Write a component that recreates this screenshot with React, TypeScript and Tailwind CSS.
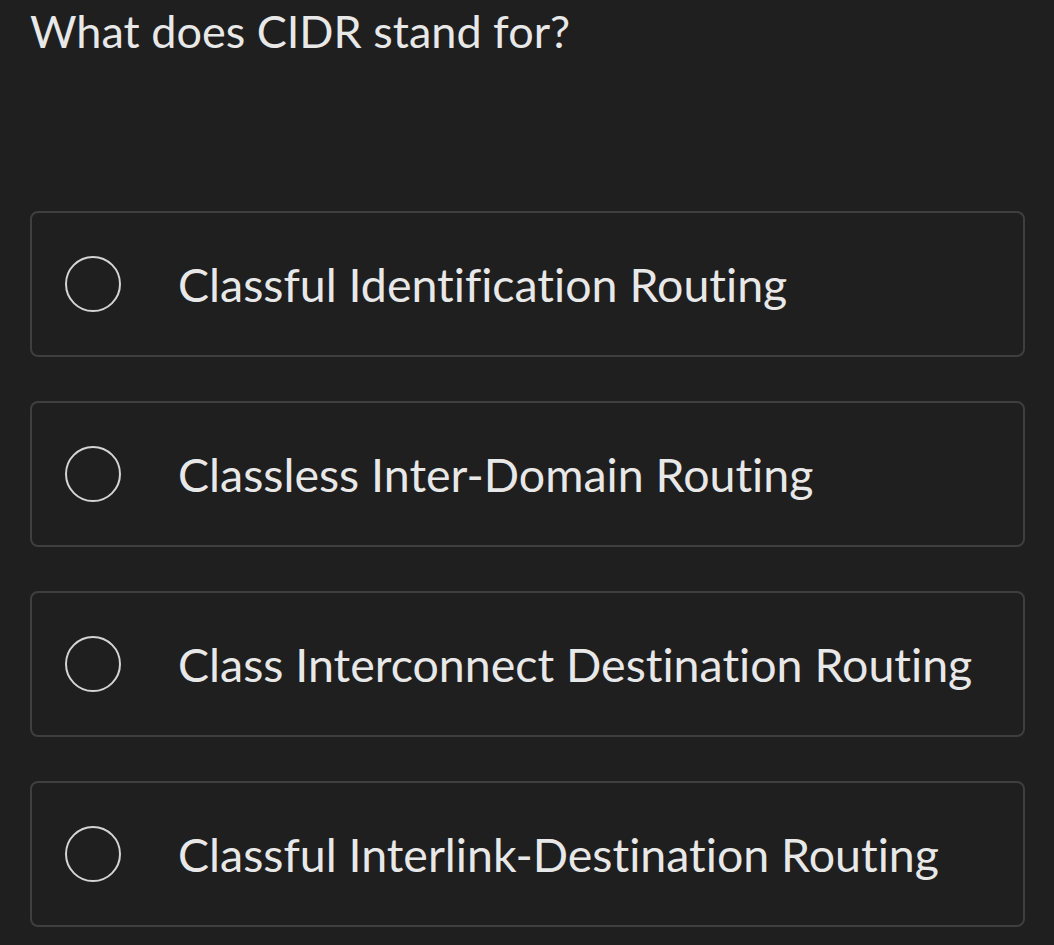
const options = [
  'Classful Identification Routing',
  'Classless Inter-Domain Routing',
  'Class Interconnect Destination Routing',
  'Classful Interlink-Destination Routing',
];

export default function App() {
  return (
    <div
      className="min-h-[945px] w-full bg-[#1f1f1f] px-[30px] pt-[3px] text-[#e8e8e8] [font-variant-ligatures:none]"
      style={{ fontFamily: 'Lato, "Noto Sans", sans-serif' }}
    >
      <h1 className="text-[45px] leading-[56px] font-normal">What does CIDR stand for?</h1>

      <div className="mt-[152px] flex flex-col gap-[44px]">
        {options.map((o) => (
          <label
            key={o}
            className="flex h-[146px] w-[995px] cursor-pointer items-center rounded-[8px] border-2 border-[#3f3f3f] pl-[33px]"
          >
            <span className="h-[56px] w-[56px] shrink-0 rounded-full border-[2.5px] border-[#d4d4d4]" />
            <span className="ml-[57px] text-[46.5px] leading-none">{o}</span>
          </label>
        ))}
      </div>
    </div>
  );
}
